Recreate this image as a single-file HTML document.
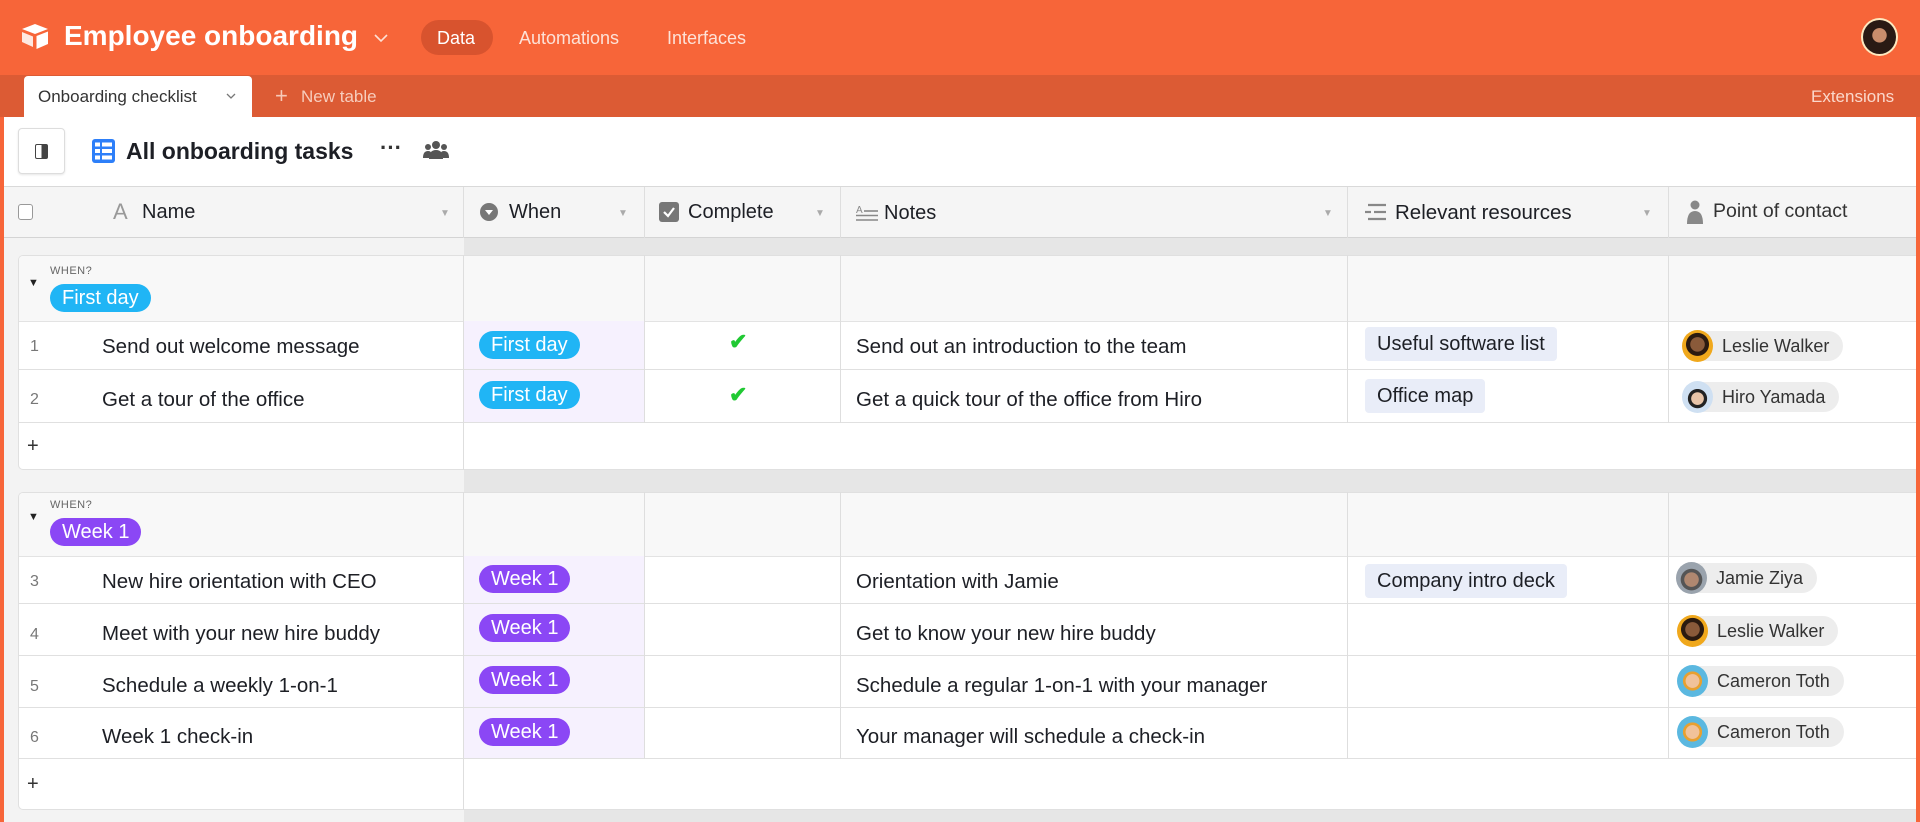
<!DOCTYPE html>
<html><head><meta charset="utf-8"><style>
*{margin:0;padding:0;box-sizing:border-box}
body{width:1920px;height:822px;overflow:hidden;font-family:"Liberation Sans",sans-serif;background:#f76539;position:relative;color:#1d1f25}
.a{position:absolute}
.t{position:absolute;white-space:nowrap;line-height:1}
.vl{position:absolute;width:1px;background:#dedede}
.hl{position:absolute;height:1px;background:#e0e0e0}
.pill{position:absolute;height:28px;border-radius:14px;color:#fff;font-size:20px;line-height:28px;padding:0 12px;white-space:nowrap}
.blue{background:#20b5f5}.purple{background:#8b47f5}
.chip{position:absolute;height:34px;background:#e9edf8;border-radius:4px;font-size:20px;line-height:34px;padding:0 12px;white-space:nowrap}
.ct{position:absolute;height:30px;background:#ededed;border-radius:15px;font-size:18px;line-height:30px;padding:0 14px 0 36px;white-space:nowrap;color:#333}
.av{position:absolute;left:-4px;top:-1px;width:31px;height:32px;border-radius:50%}
.num{position:absolute;left:30px;font-size:16px;color:#777}
.nm{position:absolute;left:102px;font-size:20.5px}
.nt{position:absolute;left:856px;font-size:20.5px}
.arr{position:absolute;font-size:10px;color:#aaa}
</style></head><body>
<!-- top bar -->
<svg class="a" style="left:20px;top:23px" width="30" height="28" viewBox="0 0 30 28"><path d="M15 1 L28 6 L15 11 L2 6Z" fill="#fff"/><path d="M16.5 13 L28 8.5 V21 L16.5 26Z" fill="#fff"/><path d="M2 9 L13 13.5 V24 L2 19Z" fill="#fff" opacity=".85"/></svg>
<div class="t" style="left:64px;top:22px;font-size:28px;font-weight:bold;color:#fff">Employee onboarding</div>
<svg class="a" style="left:374px;top:34px" width="14" height="9"><path d="M1 1 L7 7 L13 1" stroke="#fde0d5" stroke-width="1.6" fill="none"/></svg>
<div class="a" style="left:421px;top:20px;width:72px;height:35px;border-radius:18px;background:#d8532e"></div>
<div class="t" style="left:437px;top:29px;font-size:18px;color:#fff">Data</div>
<div class="t" style="left:519px;top:29px;font-size:18px;color:#fde2d8">Automations</div>
<div class="t" style="left:667px;top:29px;font-size:18px;color:#fde2d8">Interfaces</div>
<div class="a" style="left:1861px;top:18px;width:37px;height:38px;border-radius:50%;background:#fde9c0;padding:2px"><div style="width:33px;height:34px;border-radius:50%;background:radial-gradient(circle at 50% 45%,#c98d6c 0 28%,#2a1a14 30% 100%)"></div></div>
<!-- tab bar -->
<div class="a" style="left:0;top:75px;width:1920px;height:42px;background:#dc5b34"></div>
<div class="a" style="left:24px;top:76px;width:228px;height:44px;background:#fff;border-radius:4px 4px 0 0"></div>
<div class="t" style="left:38px;top:88px;font-size:17px;color:#333">Onboarding checklist</div>
<svg class="a" style="left:226px;top:93px" width="10" height="7"><path d="M1 1 L5 5 L9 1" stroke="#777" stroke-width="1.3" fill="none"/></svg>
<div class="t" style="left:275px;top:85px;font-size:22px;color:#f7c9b8">+</div>
<div class="t" style="left:301px;top:88px;font-size:17px;color:#f7cdbd">New table</div>
<div class="t" style="left:1811px;top:88px;font-size:17px;color:#fbd8cb">Extensions</div>
<!-- main white -->
<div class="a" style="left:4px;top:117px;width:1912px;height:705px;background:#fff"></div>
<div class="a" style="left:18px;top:128px;width:47px;height:46px;border:1px solid #ddd;border-radius:4px;background:#fff;box-shadow:0 1px 2px rgba(0,0,0,.1)"></div>
<div class="a" style="left:35px;top:144px;width:13px;height:15px;border:1.5px solid #444;border-radius:2px;background:linear-gradient(90deg,#fff 50%,#444 50%)"></div>
<svg class="a" style="left:92px;top:139px" width="23" height="24" viewBox="0 0 23 24"><rect x="0" y="0" width="23" height="24" rx="3" fill="#2d7ff9"/><g fill="#fff"><rect x="3" y="3.5" width="5" height="4"/><rect x="10" y="3.5" width="10" height="4"/><rect x="3" y="10" width="5" height="4"/><rect x="10" y="10" width="10" height="4"/><rect x="3" y="16.5" width="5" height="4"/><rect x="10" y="16.5" width="10" height="4"/></g></svg>
<div class="t" style="left:126px;top:140px;font-size:23px;font-weight:bold">All onboarding tasks</div>
<div class="t" style="left:380px;top:137px;font-size:22px;font-weight:bold;color:#333">···</div>
<svg class="a" style="left:423px;top:140px" width="26" height="20" viewBox="0 0 26 20"><g fill="#555"><circle cx="13" cy="5" r="4"/><circle cx="5" cy="7" r="3"/><circle cx="21" cy="7" r="3"/><path d="M6 19 Q6 10 13 10 Q20 10 20 19Z"/><path d="M0 18 Q0 11 5 11 Q8 11 8 13 L6 18Z"/><path d="M26 18 Q26 11 21 11 Q18 11 18 13 L20 18Z"/></g></svg>
<!-- header row -->
<div class="a" style="left:4px;top:186px;width:1912px;height:52px;background:#f5f5f5;border-top:1px solid #d9d9d9;border-bottom:1px solid #d4d4d4"></div>
<div class="a" style="left:18px;top:204px;width:15px;height:16px;border:1.5px solid #999;border-radius:3px;background:#fff"></div>
<div class="t" style="left:113px;top:201px;font-size:22px;color:#999">A</div>
<div class="t" style="left:142px;top:202px;font-size:20px">Name</div>
<svg class="a" style="left:480px;top:203px" width="18" height="18"><circle cx="9" cy="9" r="9" fill="#777"/><path d="M5 7 L13 7 L9 12Z" fill="#fff"/></svg>
<div class="t" style="left:509px;top:202px;font-size:20px">When</div>
<svg class="a" style="left:659px;top:202px" width="20" height="20"><rect width="20" height="20" rx="3" fill="#777"/><path d="M5 10 L9 14 L15 6" stroke="#fff" stroke-width="2.2" fill="none"/></svg>
<div class="t" style="left:688px;top:202px;font-size:20px">Complete</div>
<svg class="a" style="left:856px;top:204px" width="22" height="18"><text x="0" y="9" font-size="10" fill="#888" font-family="Liberation Sans">A</text><g stroke="#888" stroke-width="1.6"><line x1="8" y1="7" x2="22" y2="7"/><line x1="0" y1="11.5" x2="22" y2="11.5"/><line x1="0" y1="16" x2="22" y2="16"/></g></svg>
<div class="t" style="left:884px;top:203px;font-size:20px">Notes</div>
<svg class="a" style="left:1365px;top:203px" width="22" height="18"><g stroke="#888" stroke-width="2.2"><line x1="3" y1="2" x2="21" y2="2"/><line x1="9" y1="9" x2="21" y2="9"/><line x1="3" y1="16" x2="21" y2="16"/><line x1="0" y1="9" x2="6" y2="9"/></g></svg>
<div class="t" style="left:1395px;top:203px;font-size:20.5px">Relevant resources</div>
<svg class="a" style="left:1686px;top:200px" width="18" height="24"><circle cx="9" cy="5" r="4.5" fill="#888"/><path d="M1 24 Q1 11 9 11 Q17 11 17 24Z" fill="#888"/></svg>
<div class="t" style="left:1713px;top:202px;font-size:19.5px;color:#333">Point of contact</div>
<div class="arr" style="left:440px;top:208px">▼</div>
<div class="arr" style="left:618px;top:208px">▼</div>
<div class="arr" style="left:815px;top:208px">▼</div>
<div class="arr" style="left:1323px;top:208px">▼</div>
<div class="arr" style="left:1642px;top:208px">▼</div>
<div class="vl" style="left:463px;top:187px;height:51px"></div>
<div class="vl" style="left:644px;top:187px;height:51px"></div>
<div class="vl" style="left:840px;top:187px;height:51px"></div>
<div class="vl" style="left:1347px;top:187px;height:51px"></div>
<div class="vl" style="left:1668px;top:187px;height:51px"></div>

<!-- body bg -->
<div class="a" style="left:4px;top:238px;width:460px;height:584px;background:#f3f3f3"></div>
<div class="a" style="left:464px;top:238px;width:1452px;height:584px;background:#e6e6e6"></div>

<!-- group 1 -->
<div class="a" style="left:18px;top:255px;width:1898px;height:215px;background:#fff;border:1px solid #e0e0e0;border-right:none;border-radius:5px 0 0 5px;overflow:hidden">
 <div class="a" style="left:0;top:0;width:1898px;height:66px;background:#f8f8f8;border-bottom:1px solid #e3e3e3"></div>
</div>
<div class="a" style="left:464px;top:321px;width:180px;height:102px;background:#f6f1fe"></div>
<div class="hl" style="left:19px;top:369px;width:1897px"></div>
<div class="hl" style="left:19px;top:422px;width:1897px"></div>
<div class="vl" style="left:463px;top:255px;height:215px"></div>
<div class="vl" style="left:644px;top:255px;height:168px"></div>
<div class="vl" style="left:840px;top:255px;height:168px"></div>
<div class="vl" style="left:1347px;top:255px;height:168px"></div>
<div class="vl" style="left:1668px;top:255px;height:168px"></div>
<div class="t" style="left:50px;top:266px;font-size:11px;color:#666;letter-spacing:.5px">WHEN?</div>
<div class="t" style="left:28px;top:278px;font-size:11px;color:#222">▼</div>
<div class="pill blue" style="left:50px;top:284px;font-size:20px">First day</div>

<div class="num" style="top:338px">1</div><div class="nm" style="top:335px">Send out welcome message</div>
<div class="pill blue" style="left:479px;top:331px">First day</div>
<div class="t" style="left:729px;top:331px;font-size:22px;color:#20c933;font-weight:bold">✔</div>
<div class="nt" style="top:335px">Send out an introduction to the team</div>
<div class="chip" style="left:1365px;top:327px">Useful software list</div>
<div class="ct" style="left:1686px;top:331px">Leslie Walker<div class="av" style="background:radial-gradient(circle at 50% 45%,#8a5a3a 0 30%,#2b1a10 32% 48%,#f0a81c 50%)"></div></div>

<div class="num" style="top:391px">2</div><div class="nm" style="top:388px">Get a tour of the office</div>
<div class="pill blue" style="left:479px;top:381px">First day</div>
<div class="t" style="left:729px;top:384px;font-size:22px;color:#20c933;font-weight:bold">✔</div>
<div class="nt" style="top:388px">Get a quick tour of the office from Hiro</div>
<div class="chip" style="left:1365px;top:379px">Office map</div>
<div class="ct" style="left:1686px;top:382px">Hiro Yamada<div class="av" style="background:radial-gradient(circle at 50% 55%,#e8c4a8 0 26%,#222 28% 40%,#cfe0f2 42%)"></div></div>
<div class="t" style="left:27px;top:436px;font-size:20px;color:#333">+</div>

<!-- group 2 -->
<div class="a" style="left:18px;top:492px;width:1898px;height:318px;background:#fff;border:1px solid #e0e0e0;border-right:none;border-radius:5px 0 0 5px;overflow:hidden">
 <div class="a" style="left:0;top:0;width:1898px;height:64px;background:#f8f8f8;border-bottom:1px solid #e3e3e3"></div>
</div>
<div class="a" style="left:464px;top:556px;width:180px;height:203px;background:#f6f1fe"></div>
<div class="hl" style="left:19px;top:603px;width:1897px"></div>
<div class="hl" style="left:19px;top:655px;width:1897px"></div>
<div class="hl" style="left:19px;top:707px;width:1897px"></div>
<div class="hl" style="left:19px;top:758px;width:1897px"></div>
<div class="vl" style="left:463px;top:492px;height:318px"></div>
<div class="vl" style="left:644px;top:492px;height:267px"></div>
<div class="vl" style="left:840px;top:492px;height:267px"></div>
<div class="vl" style="left:1347px;top:492px;height:267px"></div>
<div class="vl" style="left:1668px;top:492px;height:267px"></div>
<div class="t" style="left:50px;top:500px;font-size:11px;color:#666;letter-spacing:.5px">WHEN?</div>
<div class="t" style="left:28px;top:512px;font-size:11px;color:#222">▼</div>
<div class="pill purple" style="left:50px;top:518px">Week 1</div>

<div class="num" style="top:573px">3</div><div class="nm" style="top:570px">New hire orientation with CEO</div>
<div class="pill purple" style="left:479px;top:565px">Week 1</div>
<div class="nt" style="top:570px">Orientation with Jamie</div>
<div class="chip" style="left:1365px;top:564px">Company intro deck</div>
<div class="ct" style="left:1680px;top:563px">Jamie Ziya<div class="av" style="background:radial-gradient(circle at 50% 55%,#b08870 0 30%,#555 32% 45%,#9aa3ad 47%)"></div></div>

<div class="num" style="top:626px">4</div><div class="nm" style="top:622px">Meet with your new hire buddy</div>
<div class="pill purple" style="left:479px;top:614px">Week 1</div>
<div class="nt" style="top:622px">Get to know your new hire buddy</div>
<div class="ct" style="left:1681px;top:616px">Leslie Walker<div class="av" style="background:radial-gradient(circle at 50% 45%,#8a5a3a 0 30%,#2b1a10 32% 48%,#f0a81c 50%)"></div></div>

<div class="num" style="top:678px">5</div><div class="nm" style="top:674px">Schedule a weekly 1-on-1</div>
<div class="pill purple" style="left:479px;top:666px">Week 1</div>
<div class="nt" style="top:674px">Schedule a regular 1-on-1 with your manager</div>
<div class="ct" style="left:1681px;top:666px">Cameron Toth<div class="av" style="background:radial-gradient(circle at 50% 50%,#f1c29a 0 30%,#e8a030 32% 42%,#5bb8e0 44%)"></div></div>

<div class="num" style="top:729px">6</div><div class="nm" style="top:725px">Week 1 check-in</div>
<div class="pill purple" style="left:479px;top:718px">Week 1</div>
<div class="nt" style="top:725px">Your manager will schedule a check-in</div>
<div class="ct" style="left:1681px;top:717px">Cameron Toth<div class="av" style="background:radial-gradient(circle at 50% 50%,#f1c29a 0 30%,#e8a030 32% 42%,#5bb8e0 44%)"></div></div>
<div class="t" style="left:27px;top:774px;font-size:20px;color:#333">+</div>
</body></html>
